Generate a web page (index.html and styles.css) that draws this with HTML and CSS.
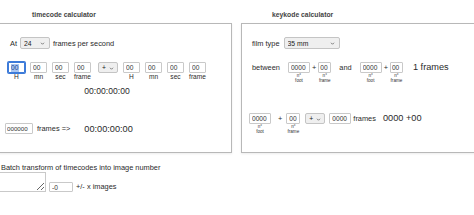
FILE: index.html
```html
<!DOCTYPE html>
<html lang="en">

<head>
    <meta charset="UTF-8">
    <title>timecode / keykode calculator</title>
    <link rel="stylesheet" href="styles.css">
</head>

<body>
    <div class="panels">
        <section class="panel panel-tc">
            <h2 class="panel-title">timecode calculator</h2>
            <div class="box">
                <div class="row fps-row">
                    <span>At</span>
                    <span class="select sel-fps">
                        <select><option>24</option></select>
                        <svg class="chev" viewBox="0 0 6 4"><path d="M1 1 L3 3 L5 1" /></svg>
                    </span>
                    <span>frames per second</span>
                </div>

                <div class="tc-calc">
                    <div class="tc-fields">
                        <label class="field"><input class="num focused" value="00"><span>H</span></label>
                        <label class="field"><input class="num" value="00"><span>mn</span></label>
                        <label class="field"><input class="num" value="00"><span>sec</span></label>
                        <label class="field"><input class="num" value="00"><span>frame</span></label>
                        <span class="select sel-op">
                            <select><option>+</option></select>
                            <svg class="chev" viewBox="0 0 6 4"><path d="M1 1 L3 3 L5 1" /></svg>
                        </span>
                        <label class="field"><input class="num" value="00"><span>H</span></label>
                        <label class="field"><input class="num" value="00"><span>mn</span></label>
                        <label class="field"><input class="num" value="00"><span>sec</span></label>
                        <label class="field"><input class="num" value="00"><span>frame</span></label>
                    </div>
                    <div class="tc-result">00:00:00:00</div>
                </div>

                <div class="row frames-row">
                    <input class="num frames-in" value="000000">
                    <span>frames =&gt;</span>
                    <span class="big">00:00:00:00</span>
                </div>
            </div>
        </section>

        <section class="panel panel-kk">
            <h2 class="panel-title">keykode calculator</h2>
            <div class="box">
                <div class="row film-row">
                    <span>film type</span>
                    <span class="select sel-film">
                        <select><option>35 mm</option></select>
                        <svg class="chev" viewBox="0 0 6 4"><path d="M1 1 L3 3 L5 1" /></svg>
                    </span>
                </div>

                <div class="kk-row between-row">
                    <span class="kk-text">between</span>
                    <label class="kk-field"><input class="num foot" value="0000"><span>n°<br>foot</span></label>
                    <span class="plus">+</span>
                    <label class="kk-field"><input class="num fr" value="00"><span>n°<br>frame</span></label>
                    <span class="kk-text and">and</span>
                    <label class="kk-field"><input class="num foot" value="0000"><span>n°<br>foot</span></label>
                    <span class="plus">+</span>
                    <label class="kk-field"><input class="num fr" value="00"><span>n°<br>frame</span></label>
                    <span class="big kk-out">1 frames</span>
                </div>

                <div class="kk-row add-row">
                    <label class="kk-field"><input class="num foot" value="0000"><span>n°<br>foot</span></label>
                    <span class="plus">+</span>
                    <label class="kk-field"><input class="num fr2" value="00"><span>n°<br>frame</span></label>
                    <span class="select sel-op">
                        <select><option>+</option></select>
                        <svg class="chev" viewBox="0 0 6 4"><path d="M1 1 L3 3 L5 1" /></svg>
                    </span>
                    <input class="num foot" value="0000">
                    <span class="kk-text">frames</span>
                    <span class="big kk-out">0000 +00</span>
                </div>
            </div>
        </section>
    </div>

    <div class="batch">
        <p class="batch-title">Batch transform of timecodes into image number</p>
        <div class="batch-row">
            <textarea class="batch-area"></textarea>
            <input class="num offset" value="-0">
            <span>+/- x images</span>
        </div>
    </div>
</body>

</html>
```

FILE: styles.css
```css
* {
    margin: 0;
    padding: 0;
    box-sizing: border-box;
}

html,
body {
    overflow: hidden;
}

body {
    font-family: "Liberation Sans", Arial, sans-serif;
    font-size: 7.4px;
    color: #2a2a2a;
    background: #fff;
    width: 474px;
    height: 215px;
}

.panels {
    display: flex;
    gap: 9px;
    margin-left: -1px;
}

.panel-tc {
    width: 233px;
    flex: none;
}

.panel-kk {
    width: 250px;
    flex: none;
}

.panel-title {
    font-size: 6.8px;
    font-weight: bold;
    line-height: 8px;
    color: #444;
    margin-top: 11px;
    padding-left: 33px;
}

.panel-kk .panel-title {
    padding-left: 31px;
}

.box {
    margin-top: 4px;
    height: 130px;
    border: 1px solid #b8b8b8;
    box-shadow: 0 1px 2px rgba(0, 0, 0, 0.08);
}

.row {
    display: flex;
    align-items: center;
}

.num {
    height: 11px;
    border: 1px solid #c9c9c9;
    border-radius: 1px;
    font-family: inherit;
    font-size: 6.6px;
    color: #333;
    padding: 0 2px;
    background: #fff;
    outline: none;
}

.num.focused {
    border-color: #3d7bd9;
    box-shadow: 0 0 0 1px #3d7bd9;
    color: #1a3f8a;
    background-image: linear-gradient(#a9c6f2, #a9c6f2);
    background-repeat: no-repeat;
    background-size: 8px 8px;
    background-position: 2px 1px;
}

/* selects */
.select {
    position: relative;
    display: inline-flex;
    align-items: center;
    height: 12px;
    background: #efefef;
    border: 1px solid #c4c4c4;
    border-radius: 2px;
}

.select select {
    appearance: none;
    -webkit-appearance: none;
    border: none;
    background: transparent;
    font-family: inherit;
    font-size: 6.8px;
    color: #222;
    width: 100%;
    height: 100%;
    padding: 0 3px;
    outline: none;
}

.chev {
    position: absolute;
    right: 4px;
    top: 4px;
    width: 5px;
    height: 3px;
    fill: none;
    stroke: #555;
    stroke-width: 1;
}

.sel-fps {
    width: 30px;
    margin: 0 3px;
}

.sel-op {
    width: 20px;
    height: 11px;
}

.sel-op .chev {
    right: 3px;
}

.sel-film {
    width: 56px;
    margin-left: 4px;
}

/* timecode */
.fps-row {
    margin-top: 13px;
    padding-left: 10px;
}

.tc-calc {
    display: flex;
    flex-direction: column;
    align-items: center;
    width: fit-content;
    margin: 13px 0 0 8px;
}

.tc-fields {
    display: flex;
    gap: 5px;
    align-items: flex-start;
}

.tc-fields .sel-op {
    margin: 0 0 0 2px;
}

.field {
    display: flex;
    flex-direction: column;
    align-items: center;
}

.field .num {
    width: 17px;
}

.field span {
    font-size: 6.6px;
    line-height: 7px;
}

.tc-result {
    font-size: 8.6px;
    line-height: 10px;
    margin-top: 6px;
}

.frames-row {
    margin-top: 27px;
    padding-left: 5px;
}

.frames-in {
    width: 28px;
    padding: 0 1px;
    font-size: 6.2px;
    margin-right: 4px;
}

.big {
    font-size: 9.2px;
}

.frames-row .big {
    margin-left: 14px;
}

/* keykode */
.film-row {
    margin-top: 13px;
    padding-left: 10px;
}

.kk-row {
    display: flex;
    align-items: flex-start;
}

.kk-row .kk-text,
.kk-row .plus,
.kk-row .big {
    line-height: 11px;
}

.between-row {
    margin-top: 13px;
    padding-left: 10px;
}

.between-row .kk-text {
    margin-right: 8px;
}

.between-row .and {
    margin: 0 8px;
}

.kk-field {
    display: flex;
    flex-direction: column;
    align-items: center;
}

.kk-field span {
    font-size: 4.6px;
    line-height: 5px;
    text-align: center;
    color: #333;
}

.foot {
    width: 22px;
}

.fr {
    width: 13px;
    padding: 0 1px;
}

.fr2 {
    width: 14px;
}

.plus {
    margin: 0 2px;
}

.kk-out {
    margin-left: 10px;
}

.add-row {
    margin-top: 30px;
    padding-left: 7px;
}

.add-row .plus {
    margin: 0 4px 0 7px;
}

.add-row .sel-op {
    margin: 0 4px 0 5px;
}

.add-row .kk-text {
    margin-left: 2px;
}

.add-row .kk-out {
    margin-left: 7px;
}

/* batch */
.batch {
    margin-top: 10px;
}

.batch-title {
    line-height: 9px;
    padding-left: 1px;
}

.batch-row {
    display: flex;
    align-items: flex-end;
    gap: 3px;
}

.batch-area {
    width: 51px;
    height: 20px;
    margin-left: -5px;
    border: 1px solid #c9c9c9;
    resize: both;
}

.offset {
    width: 24px;
    height: 10px;
}

.batch-row span {
    line-height: 10px;
}
```
